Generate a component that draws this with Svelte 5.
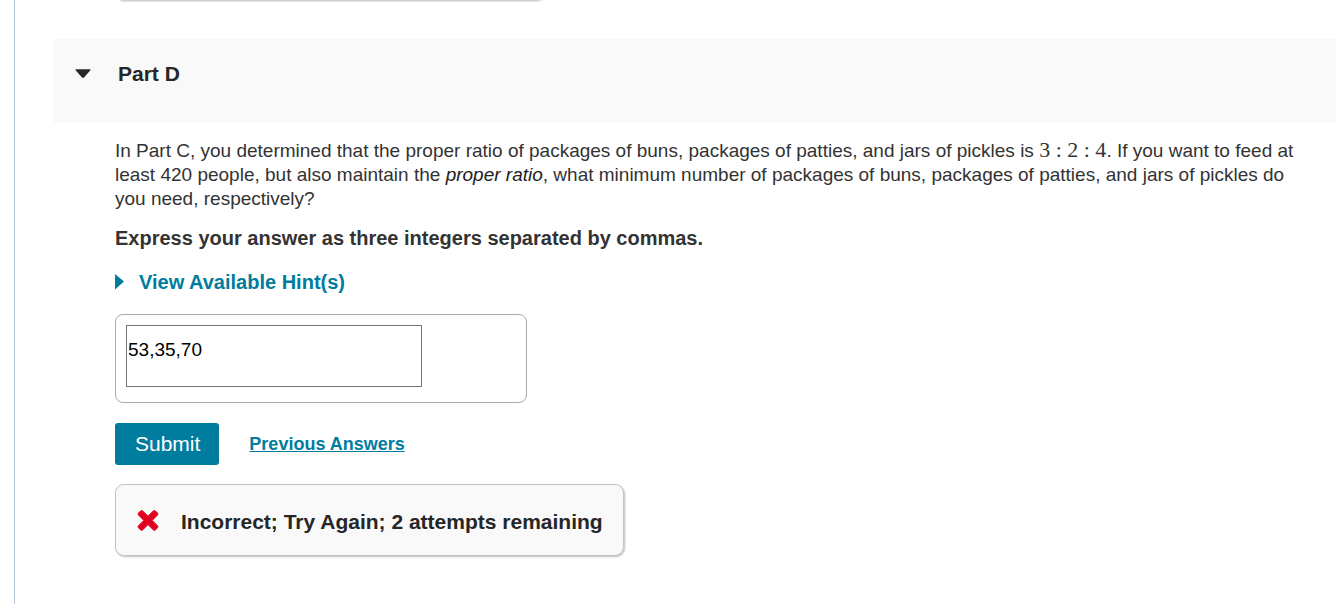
<script lang="ts">
  let expanded = $state(true);
  let hintsOpen = $state(false);
  let answer = $state("53,35,70");
  const attempts = 2;

  function submit(e: SubmitEvent) {
    e.preventDefault();
  }
</script>

<main class="problem">
  <div class="prev-feedback"></div>

  <section class="part">
    <h2 class="part-header">
      <button class="toggle" aria-expanded={expanded} onclick={() => (expanded = !expanded)}>
        <svg width="16" height="10" viewBox="0 0 16 10" aria-hidden="true">
          <path d="M1.2 0.2H14.8Q16.2 0.4 15.2 1.5L9 8.5Q8 9.4 7 8.5L0.8 1.5Q-0.2 0.4 1.2 0.2Z" fill="#262626" />
        </svg>
        <span>Part D</span>
      </button>
    </h2>

    {#if expanded}
      <div class="part-body">
        <p class="question">
          In Part C, you determined that the proper ratio of packages of buns, packages of patties, and jars of pickles is
          <span class="math">3&#8197;:&#8197;2&#8197;:&#8197;4</span>. If you want to feed at least 420 people, but also maintain the <em>proper ratio</em>, what minimum number of packages of buns, packages of patties, and jars of pickles do you need, respectively?
        </p>
        <p class="instructions" id="instructions">Express your answer as three integers separated by commas.</p>

        <button class="hints" aria-expanded={hintsOpen} onclick={() => (hintsOpen = !hintsOpen)}>
          <svg width="9" height="16" viewBox="0 0 9 16" aria-hidden="true">
            <path d="M0 0L9 7.5L0 15.5Z" fill="#007c9e" />
          </svg>
          <span>View Available Hint(s)</span>
        </button>

        <form onsubmit={submit}>
          <div class="answer-box">
            <input type="text" bind:value={answer} aria-labelledby="instructions" />
          </div>
          <div class="actions">
            <button class="submit" type="submit">Submit</button>
            <a href="#previous">Previous Answers</a>
          </div>
        </form>

        <div class="feedback" role="status">
          <svg width="22" height="22" viewBox="0 0 22 22" aria-hidden="true">
            <path d="M3.6 0.9Q4.6 0 5.6 0.9L11 6.2L16.4 0.9Q17.4 0 18.4 0.9L20.5 3Q21.4 4 20.5 5L15.2 10.4L20.5 15.8Q21.4 16.8 20.5 17.8L18.4 19.9Q17.4 20.8 16.4 19.9L11 14.6L5.6 19.9Q4.6 20.8 3.6 19.9L1.5 17.8Q0.6 16.8 1.5 15.8L6.8 10.4L1.5 5Q0.6 4 1.5 3Z" fill="#e1001f" stroke="#e1001f" />
          </svg>
          <span>Incorrect; Try Again; {attempts} attempts remaining</span>
        </div>
      </div>
    {/if}
  </section>
</main>

<style>
  :global(body) {
    background: #fff;
    color: #333;
    font-family: "Liberation Sans", Arial, sans-serif;
    font-size: 20px;
    line-height: 24px;
  }
  .problem {
    box-sizing: border-box;
    min-height: 100vh;
    margin-left: 14px;
    padding: 0 6px 40px 39px;
    border-left: 1px solid #b3c7dc;
    overflow: hidden;
  }
  .prev-feedback {
    box-sizing: border-box;
    width: 430px;
    height: 20px;
    margin: -19px 0 38px 61px;
    border: 1px solid #d0d0d0;
    border-radius: 8px;
    background: #f9f9f9;
    box-shadow: 1px 1px 1px rgba(0, 0, 0, 0.1);
  }
  button {
    border: none;
    background: transparent;
    font: inherit;
    cursor: pointer;
  }
  .part-header {
    margin: 0;
    padding: 23px 21px 37px;
    background: #f9f9f9;
    font-size: 21px;
  }
  .toggle {
    display: flex;
    align-items: center;
    gap: 27px;
    padding: 0;
    color: #262626;
  }
  .part-body {
    padding: 16px 20px 0 61px;
  }
  p {
    margin: 0 0 15px;
  }
  .question {
    font-size: 19px;
  }
  .question em { color: #222; }
  .math {
    font-family: "Liberation Serif", "Times New Roman", serif;
    font-size: 22px;
    line-height: 20px;
    white-space: nowrap;
  }
  .instructions {
    margin-bottom: 20px;
    font-weight: bold;
  }
  .hints {
    display: flex;
    align-items: center;
    gap: 15px;
    margin-bottom: 20px;
    padding: 0;
    color: #007c9e;
    font-weight: bold;
  }
  .answer-box {
    box-sizing: border-box;
    width: 412px;
    max-width: 100%;
    margin-bottom: 20px;
    padding: 10px 10px 15px;
    border: 1px solid #aaa;
    border-radius: 8px;
  }
  .answer-box input {
    display: block;
    box-sizing: border-box;
    width: 296px;
    max-width: 100%;
    height: 62px;
    padding: 0 1px 13px;
    border: 1px solid #767676;
    border-radius: 0;
    color: #000;
    font: inherit;
    font-size: 19px;
  }
  .actions {
    display: flex;
    align-items: center;
    gap: 30px;
    margin-bottom: 19px;
  }
  .submit {
    padding: 9px 19px 9px 20px;
    border-radius: 3px;
    background: #007c9e;
    color: #fff;
    font-size: 21px;
  }
  .actions a {
    color: #007c9e;
    font-size: 18px;
    font-weight: bold;
  }
  .feedback {
    display: inline-flex;
    align-items: flex-start;
    gap: 22px;
    padding: 25px 20px 21px 21px;
    border: 1px solid #c4c4c4;
    border-radius: 9px;
    background: #f9f9f9;
    box-shadow: 1px 1px 2px rgba(0, 0, 0, 0.25);
    color: #262626;
    font-size: 21px;
    font-weight: bold;
  }
</style>
